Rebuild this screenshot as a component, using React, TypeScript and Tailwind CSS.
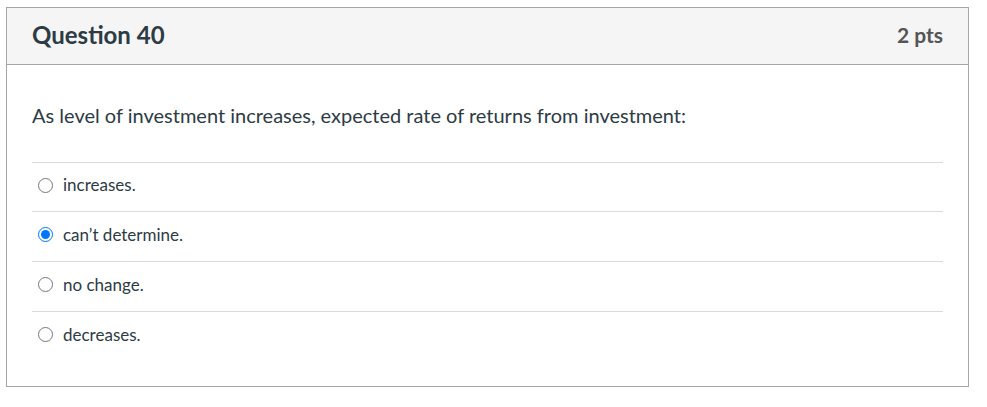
import { useState } from "react";

type Answer = {
  id: string;
  label: string;
};

const answers: Answer[] = [
  { id: "a1", label: "increases." },
  { id: "a2", label: "can’t determine." },
  { id: "a3", label: "no change." },
  { id: "a4", label: "decreases." },
];

export default function App() {
  const [selected, setSelected] = useState<string>("a2");

  return (
    <div className="min-h-screen bg-white pt-[7px] pl-[6px] font-['Lato','Noto_Sans',sans-serif] text-[#2d3b45]">
      <div className="w-[963px] border border-[#a6a6a6]">
        <div className="flex h-[57px] items-center justify-between border-b border-[#a6a6a6] bg-[#f5f5f5] px-[25px] pb-[3px]">
          <h2 className="text-[24px] font-bold text-[#2d3b45]">Question 40</h2>
          <span className="text-[21px] font-bold text-[#555]">2 pts</span>
        </div>

        <div className="px-[25px] pt-[37px] pb-[25px]">
          <p className="text-[20px] leading-[27px]">
            As level of investment increases, expected rate of returns from investment:
          </p>

          <div className="mt-[33px]">
            {answers.map((answer, i) => (
              <label
                key={answer.id}
                className={`flex items-center border-t border-[#dadada] pb-[4px] text-[17px] ${
                  i === 0 ? "h-[49px]" : "h-[50px]"
                }`}
              >
                <input
                  type="radio"
                  name="q40"
                  className="mr-[10px] ml-[6px] h-[15px] w-[15px]"
                  checked={selected === answer.id}
                  onChange={() => setSelected(answer.id)}
                />
                <span>{answer.label}</span>
              </label>
            ))}
          </div>
        </div>
      </div>
    </div>
  );
}
